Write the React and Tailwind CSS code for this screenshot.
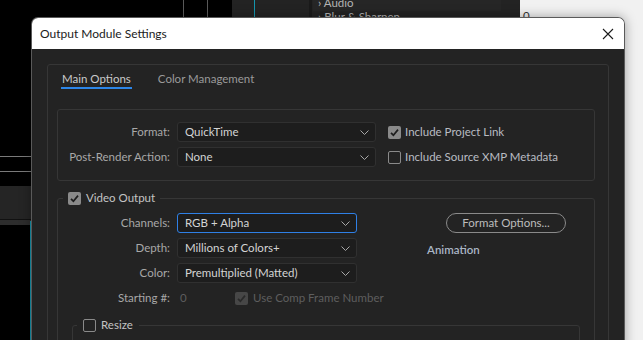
import React from "react";

function Check({ checked, disabled }) {
  const box = checked
    ? disabled
      ? "bg-[#474747]"
      : "bg-[#8a8a8a]"
    : "border-[1.5px] border-[#8a8a8a]";
  return (
    <span className={`w-[13px] h-[13px] shrink-0 rounded-[2px] flex items-center justify-center ${box}`}>
      {checked && (
        <svg width="13" height="13" viewBox="0 0 13 13">
          <path d="M3 6.8 L5.4 9.2 L10 3.6" fill="none" stroke={disabled ? "#2a2a2a" : "#1e1e1e"} strokeWidth="1.7" />
        </svg>
      )}
    </span>
  );
}

function Chevron() {
  return (
    <svg width="9" height="5" viewBox="0 0 9 5" className="shrink-0">
      <path d="M0.5 0.5 L4.5 4.5 L8.5 0.5" fill="none" stroke="#a8a8a8" strokeWidth="1" />
    </svg>
  );
}

function Select({ value, width, focused }) {
  const border = focused ? "border-[#2f80e6]" : "border-[#303030]";
  return (
    <div className={`${width} h-[20px] shrink-0 bg-[#1d1d1d] border ${border} rounded-[3px] flex items-center justify-between pl-[7px] pr-[6px] text-[#d4d4d4] whitespace-nowrap`}>
      <span>{value}</span>
      <Chevron />
    </div>
  );
}

function Label({ children }) {
  return <div className="w-[119px] shrink-0 text-right pr-[7px] text-[#a8a8a8] whitespace-nowrap">{children}</div>;
}

export default function App() {
  return (
    <div className="relative w-[643px] h-[340px] overflow-hidden bg-black font-['Lato',sans-serif] text-[11.5px] leading-[16px]">
      {/* background application */}
      <div className="absolute left-[183px] top-0 w-px h-full bg-[#5a5a5a]" />
      <div className="absolute left-[207px] top-0 w-px h-full bg-[#5a5a5a]" />
      <div className="absolute left-0 top-[156px] w-[40px] h-px bg-[#7a7a7a]" />
      <div className="absolute left-0 top-[171px] w-[40px] h-px bg-[#7a7a7a]" />
      <div className="absolute left-0 top-[186px] w-[40px] h-[34px] bg-[#252525] border-b border-[#111]" />
      <div className="absolute left-0 top-[220px] w-[40px] h-[5px] bg-[#2d2d2d]" />
      <div className="absolute left-[30px] top-[221px] w-px h-[130px] bg-[#1595ad]" />

      <div className="absolute left-[232px] top-0 w-[288px] h-full bg-[#232323]">
        <div className="absolute left-[22px] top-0 w-px h-full bg-[#1595ad]" />
        <div className="absolute left-[77px] top-0 w-[3px] h-full bg-[#1a1a1a]" />
        <div className="absolute left-[81px] top-0 w-[188px] h-[11px] bg-[#262626]" />
        <div className="absolute left-[86px] top-[-4px] text-[#b4b4b4] leading-[14px] whitespace-nowrap">› Audio</div>
        <div className="absolute left-[86px] top-[10px] text-[#b4b4b4] leading-[14px] whitespace-nowrap">› Blur &amp; Sharpen</div>
      </div>
      <div className="absolute left-[520px] top-0 w-[123px] h-full bg-[#f1f1f1]">
        <div className="absolute left-[3px] top-[8px] text-[#333]">0</div>
      </div>

      {/* dialog window */}
      <div className="absolute left-[31px] top-[17px] w-[594px] h-[340px] flex flex-col rounded-t-[7px] overflow-hidden shadow-[0_0_12px_rgba(0,0,0,0.35)] border border-[#5a5a5a] border-b-0">
        <div className="h-[31px] shrink-0 bg-white flex items-center justify-between pl-[8px] pr-[10px]">
          <span className="text-[#1b1b1b] text-[12px]">Output Module Settings</span>
          <svg width="12" height="12" viewBox="0 0 12 12">
            <path d="M1 1 L11 11 M11 1 L1 11" stroke="#1b1b1b" strokeWidth="1.1" />
          </svg>
        </div>
        <div className="flex-1 bg-[#232323] pl-[15px] pr-[15px] pt-[15px]">
          <div className="h-full border border-[#363636] rounded-[3px] pl-[9px] pr-[13px]">
            {/* tabs */}
            <div className="flex gap-[26px] pl-[4px] pt-[6px]">
              <div className="px-px border-b-2 border-[#2d86e8] text-[#cacaca]">Main Options</div>
              <div className="text-[#9a9a9a]">Color Management</div>
            </div>

            {/* section 1 */}
            <div className="mt-[20px] border border-[#363636] rounded-[3px] pt-[12px] pb-[13px] flex flex-col gap-[5px]">
              <div className="flex items-center">
                <Label>Format:</Label>
                <Select value="QuickTime" width="w-[199px]" />
                <div className="flex items-center gap-[4px] ml-[12px] text-[#b9bcc2] whitespace-nowrap">
                  <Check checked />
                  <span>Include Project Link</span>
                </div>
              </div>
              <div className="flex items-center">
                <Label>Post-Render Action:</Label>
                <Select value="None" width="w-[199px]" />
                <div className="flex items-center gap-[4px] ml-[12px] text-[#b9bcc2] whitespace-nowrap">
                  <Check />
                  <span>Include Source XMP Metadata</span>
                </div>
              </div>
            </div>

            {/* section 2 : video output */}
            <fieldset className="mt-[9px] border border-[#363636] rounded-[3px] pb-[20px]">
              <legend className="ml-[5px] px-[5px] flex items-center gap-[5px] text-[#c4c4c4]">
                <Check checked />
                <span>Video Output</span>
              </legend>
              <div className="flex pt-[7px]">
                <div className="w-[299px] shrink-0 flex flex-col gap-[5px]">
                  <div className="flex items-center">
                    <Label>Channels:</Label>
                    <Select value="RGB + Alpha" width="w-[180px]" focused />
                  </div>
                  <div className="flex items-center">
                    <Label>Depth:</Label>
                    <Select value="Millions of Colors+" width="w-[180px]" />
                  </div>
                  <div className="flex items-center">
                    <Label>Color:</Label>
                    <Select value="Premultiplied (Matted)" width="w-[180px]" />
                  </div>
                  <div className="flex items-center h-[20px] whitespace-nowrap">
                    <Label>Starting #:</Label>
                    <span className="ml-[3px] w-[55px] shrink-0 text-[#5e5e5e]">0</span>
                    <div className="flex items-center gap-[5px] text-[#5e5e5e]">
                      <Check checked disabled />
                      <span>Use Comp Frame Number</span>
                    </div>
                  </div>
                </div>
                <div className="ml-[70px] flex flex-col whitespace-nowrap">
                  <div className="ml-[19px] w-[120px] h-[20px] rounded-full border-[1.5px] border-[#8a8a8a] flex items-center justify-center text-[#bdbdbd]">
                    Format Options...
                  </div>
                  <div className="mt-[9px] text-[#aab6c6] font-semibold">Animation</div>
                </div>
              </div>

              <fieldset className="mt-[9px] mx-[14px] border border-[#363636] rounded-[3px] h-[40px]">
                <legend className="ml-[4px] px-[6px] flex items-center gap-[5px] text-[#c4c4c4]">
                  <Check />
                  <span>Resize</span>
                </legend>
              </fieldset>
            </fieldset>
          </div>
        </div>
      </div>
    </div>
  );
}
